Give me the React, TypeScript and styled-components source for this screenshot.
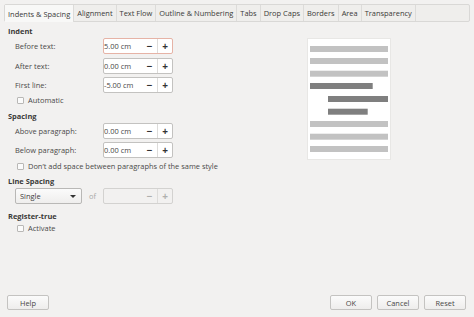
import React from "react";
import styled, { createGlobalStyle } from "styled-components";

const Global = createGlobalStyle`
  html, body { margin: 0; padding: 0; background: #f2f1f0; }
  body { font-family: "Open Sans", "Noto Sans", sans-serif; }
  * { box-sizing: border-box; }
`;

const Root = styled.div`
  width: 474px;
  height: 317px;
  display: flex;
  flex-direction: column;
  background: #f2f1f0;
  color: #484846;
  font-size: 7.45px;
  overflow: hidden;
`;

const TabStrip = styled.div`
  display: flex;
  height: 18px;
  margin: 4px 4px 0 4px;
  border: 1px solid #d9d8d6;
  border-radius: 2px;
  background: #efeeec;
`;

const Tab = styled.div<{ $active?: boolean }>`
  display: flex;
  align-items: center;
  padding: 0 3px;
  border-right: 1px solid #dcdbd9;
  white-space: nowrap;
  color: #3a3a38;
  background: ${(p) => (p.$active ? "#f8f8f7" : "transparent")};
  ${(p) => (p.$active ? "margin-bottom: -1px;" : "")}
`;

const Body = styled.div`
  flex: 1;
  display: grid;
  grid-template-columns: 300px 82px;
  align-items: start;
  padding: 3px 0 0 8px;
`;

const Form = styled.div`
  display: flex;
  flex-direction: column;
`;

const Heading = styled.div<{ $mt?: number }>`
  height: 12px;
  line-height: 12px;
  font-weight: 700;
  color: #3a3a38;
  margin-top: ${(p) => p.$mt ?? 0}px;
`;

const Row = styled.div<{ $mt?: number }>`
  display: flex;
  align-items: center;
  height: 16px;
  padding-left: 7px;
  margin-top: ${(p) => p.$mt ?? 0}px;
`;

const Label = styled.span`
  width: 88px;
  color: #4a4a48;
`;

const Spin = styled.div<{ $focus?: boolean; $disabled?: boolean }>`
  display: flex;
  width: 70px;
  height: 16px;
  border: 1px solid ${(p) => (p.$focus ? "#e6b3a6" : p.$disabled ? "#d3d2d0" : "#c3c2c0")};
  border-radius: 2px;
  background: ${(p) => (p.$disabled ? "#f2f1f0" : "#ffffff")};
  color: ${(p) => (p.$disabled ? "#b0b0ae" : "#333333")};
`;

const SpinValue = styled.span`
  flex: 1;
  display: flex;
  align-items: center;
  color: #484846;
`;

const Step = styled.span<{ $sep?: boolean }>`
  width: 15px;
  display: flex;
  align-items: center;
  justify-content: center;
  font-weight: 700;
  font-size: 10px;
  border-left: ${(p) => (p.$sep ? "1px solid #dddcda" : "none")};
`;

const CheckRow = styled.div<{ $mt?: number }>`
  display: flex;
  align-items: center;
  height: 12px;
  padding-left: 9px;
  margin-top: ${(p) => p.$mt ?? 0}px;
  color: #4a4a48;
`;

const Box = styled.span`
  width: 7px;
  height: 7px;
  border: 1px solid #b9b8b6;
  border-radius: 1px;
  background: #fbfbfb;
  margin-right: 4px;
`;

const Select = styled.div`
  display: flex;
  align-items: center;
  justify-content: space-between;
  width: 67px;
  height: 16px;
  padding: 0 4px;
  border: 1px solid #b9b8b6;
  border-radius: 2px;
  background: linear-gradient(#fbfbfb, #efeeed);
  color: #3c3c3c;
`;

const Caret = styled.span`
  width: 0;
  height: 0;
  border-left: 3px solid transparent;
  border-right: 3px solid transparent;
  border-top: 3px solid #333;
  margin-right: 1px;
`;

const Of = styled.span`
  width: 14px;
  margin-left: 7px;
  color: #a8a8a6;
`;

const Preview = styled.div`
  margin-top: 14px;
  width: 82px;
  height: 120px;
  background: #ffffff;
  box-shadow: 0 0 0 1px #e8e7e5;
`;

const Footer = styled.div`
  display: flex;
  align-items: center;
  gap: 5px;
  padding: 0 8px 7px 7px;
`;

const Button = styled.div`
  width: 42px;
  height: 15px;
  display: flex;
  align-items: center;
  justify-content: center;
  border: 1px solid #c4c3c1;
  border-radius: 2px;
  background: linear-gradient(#fbfbfb, #eeedec);
  color: #484846;
`;

const Spacer = styled.div`
  flex: 1;
`;

const SpinBox = ({ value, focus, disabled }: { value: string; focus?: boolean; disabled?: boolean }) => (
  <Spin $focus={focus} $disabled={disabled}>
    <SpinValue>{value}</SpinValue>
    <Step>−</Step>
    <Step $sep>+</Step>
  </Spin>
);

const bars = [
  { y: 7, x: 2, w: 78, dark: false },
  { y: 19, x: 2, w: 78, dark: false },
  { y: 31.7, x: 2, w: 78, dark: false },
  { y: 44, x: 2, w: 62.7, dark: true },
  { y: 57, x: 20, w: 60, dark: true },
  { y: 69.7, x: 20, w: 39.7, dark: true },
  { y: 82, x: 2, w: 78, dark: false },
  { y: 94.7, x: 2, w: 78, dark: false },
  { y: 107, x: 2, w: 78, dark: false },
];

export default function App() {
  const tabs = [
    "Indents & Spacing",
    "Alignment",
    "Text Flow",
    "Outline & Numbering",
    "Tabs",
    "Drop Caps",
    "Borders",
    "Area",
    "Transparency",
  ];
  return (
    <Root>
      <Global />
      <TabStrip>
        {tabs.map((t, i) => (
          <Tab key={t} $active={i === 0}>
            {t}
          </Tab>
        ))}
      </TabStrip>
      <Body>
        <Form>
          <Heading>Indent</Heading>
          <Row $mt={1}>
            <Label>Before text:</Label>
            <SpinBox value="5.00 cm" focus />
          </Row>
          <Row $mt={4}>
            <Label>After text:</Label>
            <SpinBox value="0.00 cm" />
          </Row>
          <Row $mt={3}>
            <Label>First line:</Label>
            <SpinBox value="-5.00 cm" />
          </Row>
          <CheckRow $mt={1}>
            <Box />
            Automatic
          </CheckRow>
          <Heading $mt={4}>Spacing</Heading>
          <Row $mt={1}>
            <Label>Above paragraph:</Label>
            <SpinBox value="0.00 cm" />
          </Row>
          <Row $mt={3}>
            <Label>Below paragraph:</Label>
            <SpinBox value="0.00 cm" />
          </Row>
          <CheckRow $mt={2}>
            <Box />
            Don’t add space between paragraphs of the same style
          </CheckRow>
          <Heading $mt={3}>Line Spacing</Heading>
          <Row $mt={1}>
            <Select>
              Single
              <Caret />
            </Select>
            <Of>of</Of>
            <SpinBox value="" disabled />
          </Row>
          <Heading $mt={6}>Register-true</Heading>
          <CheckRow>
            <Box />
            Activate
          </CheckRow>
        </Form>
        <Preview>
          <svg width="82" height="120" viewBox="0 0 82 120">
            {bars.map((b, i) => (
              <rect key={i} x={b.x} y={b.y} width={b.w} height={6} fill={b.dark ? "#7f7f7f" : "#c2c2c2"} />
            ))}
          </svg>
        </Preview>
      </Body>
      <Footer>
        <Button>Help</Button>
        <Spacer />
        <Button>OK</Button>
        <Button>Cancel</Button>
        <Button>Reset</Button>
      </Footer>
    </Root>
  );
}
